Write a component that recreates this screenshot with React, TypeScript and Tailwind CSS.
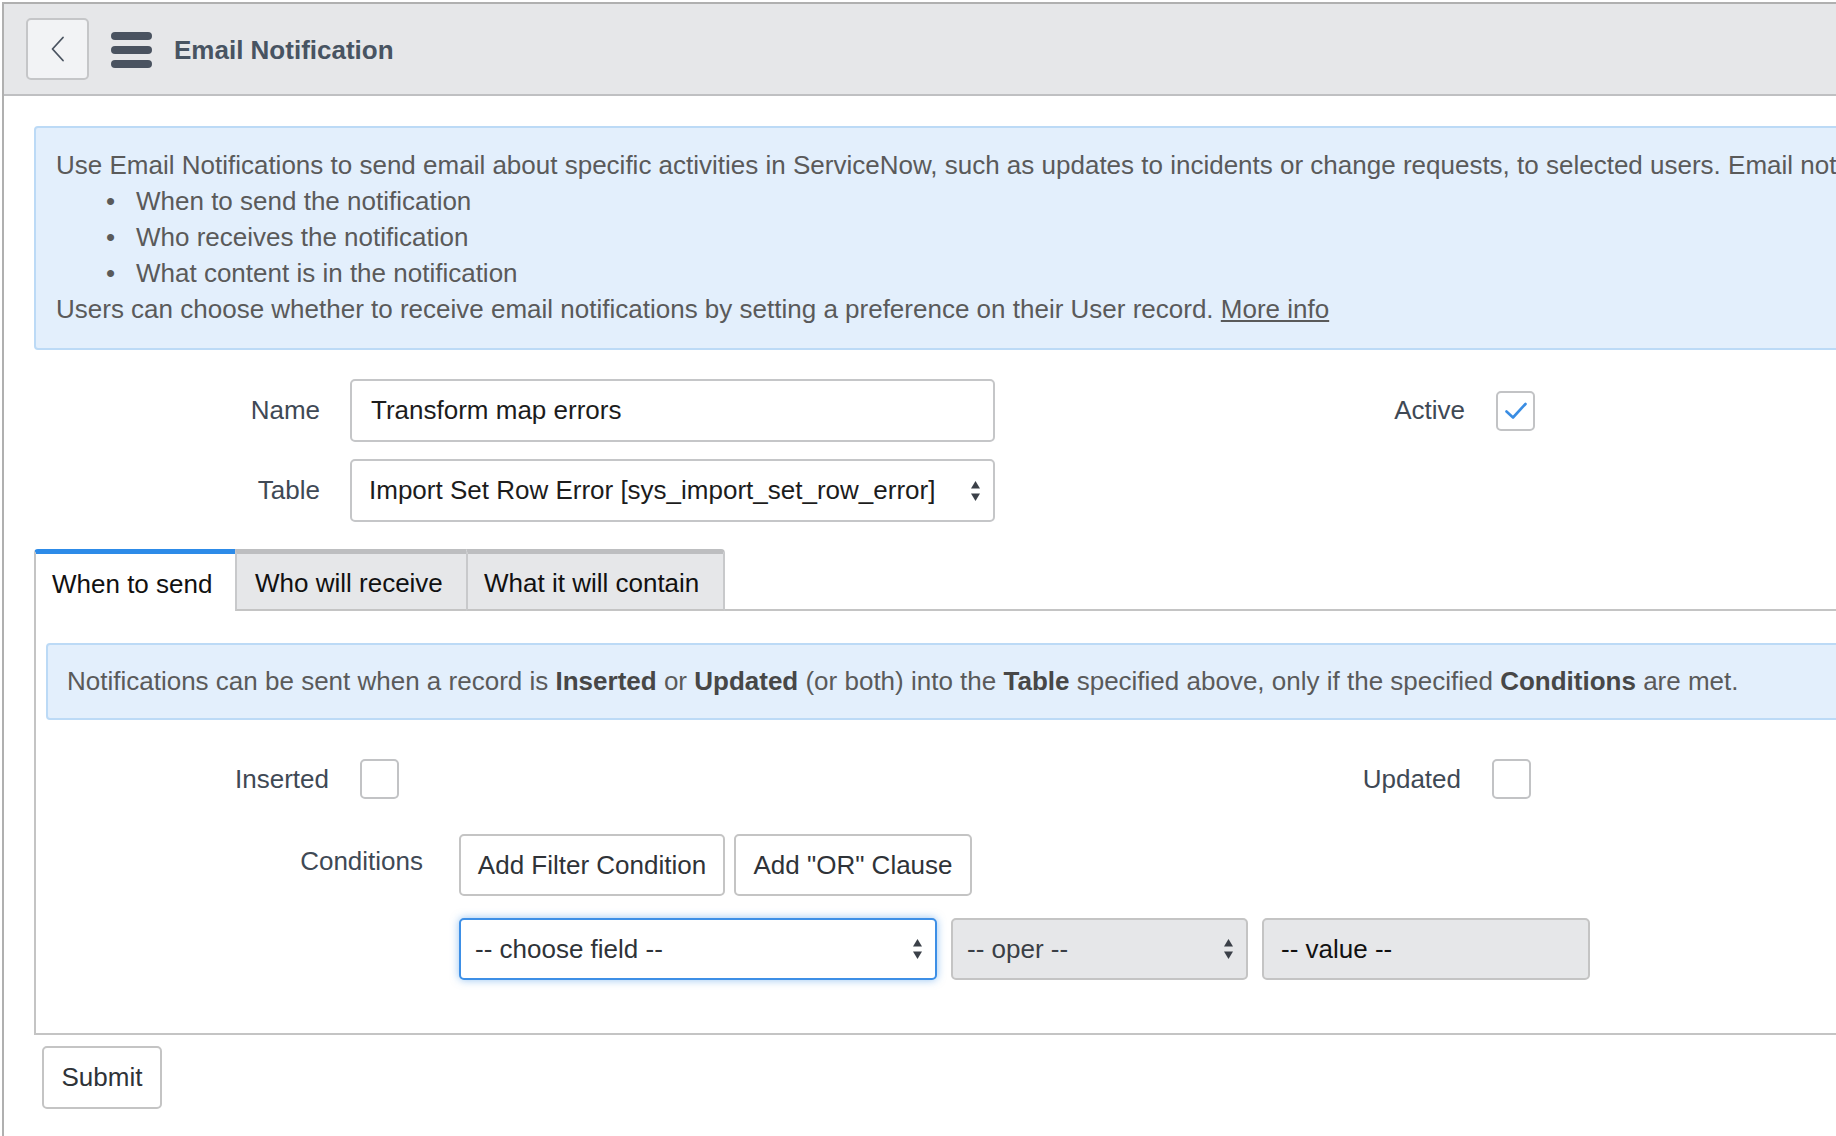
import React from "react"

const Arrows = () => (
  <svg width="11" height="22" viewBox="0 0 11 22" className="shrink-0">
    <path d="M5.5 1 L10 8.5 L1 8.5 Z" fill="#3b4048" />
    <path d="M5.5 21 L10 13.5 L1 13.5 Z" fill="#3b4048" />
  </svg>
)

const Checkbox = ({ checked }: { checked?: boolean }) => (
  <div className="w-[39px] h-[40px] shrink-0 rounded-[5px] border-2 border-[#c2c3c5] bg-white flex items-center justify-center">
    {checked && (
      <svg width="24" height="20" viewBox="0 0 24 20">
        <path
          d="M2.5 10.5 L9 16.5 L21.5 3"
          fill="none"
          stroke="#3a8de3"
          strokeWidth="2.6"
          strokeLinecap="round"
          strokeLinejoin="round"
        />
      </svg>
    )}
  </div>
)

const InfoBox: React.FC<{ children: React.ReactNode; className?: string }> = ({
  children,
  className,
}) => (
  <div
    className={
      "border-2 border-[#bcdaf6] bg-[#e3effc] rounded-[4px] text-[#5a5a5a] whitespace-nowrap " +
      (className ?? "")
    }
  >
    {children}
  </div>
)

const Bullet = ({ children }: { children: React.ReactNode }) => (
  <li className="flex pl-[50px]">
    <span className="w-[30px]">•</span>
    <span>{children}</span>
  </li>
)

export default function App() {
  return (
    <div className="w-[1836px] h-[1136px] overflow-hidden bg-white font-['Liberation_Sans',Arial,sans-serif] text-[26px]">
      <div className="mt-[2px] ml-[2px] w-[2400px] h-[1200px] border-l-2 border-t-2 border-[#b0b0b0]">
        {/* header */}
        <div className="h-[92px] bg-[#e6e7e9] border-b-2 border-[#bfc0c2] flex items-center pl-[22px]">
          <button className="w-[63px] h-[62px] rounded-[5px] border-2 border-[#c5c6c8] bg-[#f2f3f5] flex items-center justify-center">
            <svg width="16" height="26" viewBox="0 0 16 26">
              <path
                d="M13 1.5 L2.5 13 L13 24.5"
                fill="none"
                stroke="#4a5360"
                strokeWidth="1.8"
                strokeLinecap="round"
                strokeLinejoin="round"
              />
            </svg>
          </button>
          <div className="ml-[22px] w-[41px] flex flex-col gap-[6px] mt-[2px]">
            <div className="h-[8px] rounded-full bg-[#4a5360]" />
            <div className="h-[8px] rounded-full bg-[#4a5360]" />
            <div className="h-[8px] rounded-full bg-[#4a5360]" />
          </div>
          <h1 className="ml-[22px] mt-[2px] font-bold text-[26px] text-[#485462]">Email Notification</h1>
        </div>

        <div className="pl-[30px] pt-[30px]">
          <InfoBox className="pl-[20px] pt-[19px] pb-[21px] leading-[36px]">
            <div>
              Use Email Notifications to send email about specific activities in ServiceNow, such as
              updates to incidents or change requests, to selected users. Email notifications can
              specify:
            </div>
            <ul>
              <Bullet>When to send the notification</Bullet>
              <Bullet>Who receives the notification</Bullet>
              <Bullet>What content is in the notification</Bullet>
            </ul>
            <div>
              Users can choose whether to receive email notifications by setting a preference on
              their User record. <span className="underline">More info</span>
            </div>
          </InfoBox>

          {/* form fields */}
          <div className="mt-[29px] flex">
            <div className="flex flex-col gap-[17px]">
              <div className="flex items-center">
                <div className="w-[286px] text-right text-[#3f4955]">Name</div>
                <div className="ml-[30px] w-[645px] h-[63px] rounded-[5px] border-2 border-[#c5c6c8] bg-white flex items-center pl-[19px] text-[#1c1c1c]">
                  Transform map errors
                </div>
              </div>
              <div className="flex items-center">
                <div className="w-[286px] text-right text-[#3f4955]">Table</div>
                <div className="ml-[30px] w-[645px] h-[63px] rounded-[5px] border-2 border-[#c5c6c8] bg-white flex items-center justify-between pl-[17px] pr-[12px] text-[#1c1c1c]">
                  <span>Import Set Row Error [sys_import_set_row_error]</span>
                  <Arrows />
                </div>
              </div>
            </div>
            <div className="flex items-center h-[63px]">
              <div className="w-[470px] text-right text-[#3f4955]">Active</div>
              <div className="ml-[31px]">
                <Checkbox checked />
              </div>
            </div>
          </div>

          {/* tabs */}
          <div className="mt-[27px]">
            <div className="flex h-[62px]">
              <div className="w-[201px] border-l-2 border-[#c4c4c4] border-t-[5px] border-t-[#2d8be8] rounded-tl-[4px] bg-white flex items-center pl-[16px] pt-[3px] text-[#111]">
                When to send
              </div>
              <div className="w-[231px] border-t-[5px] border-t-[#bdbec0] border-l-2 border-l-[#c8c9cb] border-b-2 border-b-[#c4c4c4] bg-[#e6e7e9] flex items-center pl-[18px] pt-[3px] text-[#111]">
                Who will receive
              </div>
              <div className="w-[259px] border-t-[5px] border-t-[#bdbec0] border-l-2 border-l-[#c8c9cb] border-r-2 border-r-[#c8c9cb] border-b-2 border-b-[#c4c4c4] rounded-tr-[4px] bg-[#e6e7e9] flex items-center pl-[16px] pt-[3px] text-[#111]">
                What it will contain
              </div>
              <div className="flex-1 border-b-2 border-[#c4c4c4]" />
            </div>

            <div className="border-l-2 border-b-2 border-[#c4c4c4] pt-[32px] pb-[53px]">
              <InfoBox className="ml-[10px] h-[77px] flex items-center pl-[19px]">
                <span>
                  Notifications can be sent when a record is{" "}
                  <b className="text-[#474747]">Inserted</b> or{" "}
                  <b className="text-[#474747]">Updated</b> (or both) into the{" "}
                  <b className="text-[#474747]">Table</b> specified above, only if the specified{" "}
                  <b className="text-[#474747]">Conditions</b> are met.
                </span>
              </InfoBox>

              <div className="mt-[39px] flex items-center">
                <div className="w-[293px] text-right text-[#3f4955]">Inserted</div>
                <div className="ml-[31px]">
                  <Checkbox />
                </div>
                <div className="w-[1062px] text-right text-[#3f4955]">Updated</div>
                <div className="ml-[31px]">
                  <Checkbox />
                </div>
              </div>

              <div className="mt-[35px] flex">
                <div className="w-[387px] text-right text-[#3f4955] pt-[8px]">Conditions</div>
                <div className="ml-[36px] flex flex-col gap-[22px]">
                  <div className="flex gap-[9px]">
                    <button className="w-[266px] h-[62px] rounded-[5px] border-2 border-[#c4c4c4] bg-white text-[#2f3338]">
                      Add Filter Condition
                    </button>
                    <button className="w-[238px] h-[62px] rounded-[5px] border-2 border-[#c4c4c4] bg-white text-[#2f3338]">
                      Add "OR" Clause
                    </button>
                  </div>
                  <div className="flex gap-[14px]">
                    <div className="w-[478px] h-[62px] rounded-[5px] border-2 border-[#3d8fe6] shadow-[0_0_8px_rgba(61,143,230,0.55)] bg-white flex items-center justify-between pl-[14px] pr-[12px] text-[#2f3338]">
                      <span>-- choose field --</span>
                      <Arrows />
                    </div>
                    <div className="w-[297px] h-[62px] rounded-[5px] border-2 border-[#c4c4c4] bg-[#e6e7e9] flex items-center justify-between pl-[14px] pr-[12px] text-[#3a3f46]">
                      <span>-- oper --</span>
                      <Arrows />
                    </div>
                    <div className="w-[328px] h-[62px] rounded-[5px] border-2 border-[#c4c4c4] bg-[#e6e7e9] flex items-center pl-[17px] text-[#111]">
                      -- value --
                    </div>
                  </div>
                </div>
              </div>
            </div>
          </div>

          <button className="mt-[11px] ml-[8px] w-[120px] h-[63px] rounded-[5px] border-2 border-[#c4c4c4] bg-white text-[#2f3338]">
            Submit
          </button>
        </div>
      </div>
    </div>
  )
}
